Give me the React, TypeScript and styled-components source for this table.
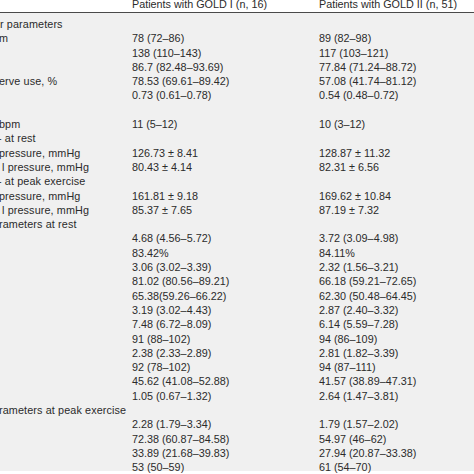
import React from "react";
import styled, { createGlobalStyle } from "styled-components";

const Global = createGlobalStyle`
  html, body {
    margin: 0;
    padding: 0;
    background: #ffffff;
    overflow: hidden;
  }
  body {
    font-family: "Liberation Sans", Arial, sans-serif;
    color: #2b2b2b;
  }
`;

const Page = styled.div`
  width: 474px;
  height: 474px;
  overflow: hidden;
  background: #ffffff;
`;

const Table = styled.div`
  margin-top: -3px;
  font-size: 10.8px;
`;

const Grid = styled.div`
  display: grid;
  grid-template-columns: 132px 187px 1fr;
`;

const HeaderRow = styled(Grid)`
  line-height: 14px;
  padding-bottom: 1px;
  border-bottom: 1px solid #4a4a4a;
  background: #ffffff;
`;

const Body = styled.div`
  height: 458px;
  padding-top: 4px;
  box-sizing: border-box;
  background: #f0f0f0;
`;

const Row = styled(Grid)`
  height: 14.3px;
  line-height: 14.3px;
  white-space: nowrap;
`;

const LabelCell = styled.div`
  overflow: hidden;
`;

const LabelText = styled.span<{ $shift: number }>`
  display: inline-block;
  margin-left: ${(p) => p.$shift}px;
  letter-spacing: 0.12px;
`;

const Cell = styled.div`
  overflow: visible;
`;

type R = [string, string, string, number?];

const rows: R[] = [
  ["r parameters", "", "", 0],
  ["m", "78 (72–86)", "89 (82–98)", -1],
  ["", "138 (110–143)", "117 (103–121)"],
  ["", "86.7 (82.48–93.69)", "77.84 (71.24–88.72)"],
  ["erve use, %", "78.53 (69.61–89.42)", "57.08 (41.74–81.12)", -1],
  ["", "0.73 (0.61–0.78)", "0.54 (0.48–0.72)"],
  ["", "", ""],
  ["bpm", "11 (5–12)", "10 (3–12)", -1],
  ["- at rest", "", "", -2],
  ["pressure, mmHg", "126.73 ± 8.41", "128.87 ± 11.32", -1],
  ["l pressure, mmHg", "80.43 ± 4.14", "82.31 ± 6.56", 2],
  ["- at peak exercise", "", "", -2],
  ["pressure, mmHg", "161.81 ± 9.18", "169.62 ± 10.84", -1],
  ["l pressure, mmHg", "85.37 ± 7.65", "87.19 ± 7.32", 2],
  ["rameters at rest", "", "", -1],
  ["", "4.68 (4.56–5.72)", "3.72 (3.09–4.98)"],
  ["", "83.42%", "84.11%"],
  ["", "3.06 (3.02–3.39)", "2.32 (1.56–3.21)"],
  ["", "81.02 (80.56–89.21)", "66.18 (59.21–72.65)"],
  ["", "65.38(59.26–66.22)", "62.30 (50.48–64.45)"],
  ["", "3.19 (3.02–4.43)", "2.87 (2.40–3.32)"],
  ["", "7.48 (6.72–8.09)", "6.14 (5.59–7.28)"],
  ["", "91 (88–102)", "94 (86–109)"],
  ["", "2.38 (2.33–2.89)", "2.81 (1.82–3.39)"],
  ["", "92 (78–102)", "94 (87–111)"],
  ["", "45.62 (41.08–52.88)", "41.57 (38.89–47.31)"],
  ["", "1.05 (0.67–1.32)", "2.64 (1.47–3.81)"],
  ["rameters at peak exercise", "", "", -1],
  ["", "2.28 (1.79–3.34)", "1.79 (1.57–2.02)"],
  ["", "72.38 (60.87–84.58)", "54.97 (46–62)"],
  ["", "33.89 (21.68–39.83)", "27.94 (20.87–33.38)"],
  ["", "53 (50–59)", "61 (54–70)"],
];

export default function App() {
  return (
    <Page>
      <Global />
      <Table>
        <HeaderRow>
          <Cell />
          <Cell>Patients with GOLD I (n, 16)</Cell>
          <Cell>Patients with GOLD II (n, 51)</Cell>
        </HeaderRow>
        <Body>
          {rows.map(([label, a, b, shift], i) => (
            <Row key={i}>
              <LabelCell>
                {label && <LabelText $shift={shift ?? 0}>{label}</LabelText>}
              </LabelCell>
              <Cell>{a}</Cell>
              <Cell>{b}</Cell>
            </Row>
          ))}
        </Body>
      </Table>
    </Page>
  );
}
